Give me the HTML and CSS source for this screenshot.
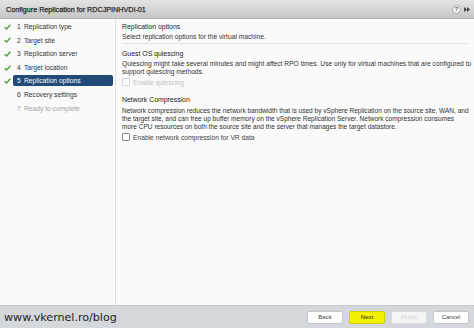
FILE: index.html
```html
<!DOCTYPE html>
<html>
<head>
	<title>Configure Replication</title>
	<link rel="stylesheet" href="styles.css">
</head>
<body>
	<div class="dialog">
		<div class="titlebar">
			<span class="title">Configure Replication for RDCJPINHVDI-01</span>
			<span class="tools">
				<span class="help">?</span>
				<svg class="more" width="6" height="5" viewBox="0 0 6 5"><path d="M0 0L3 2.5L0 5ZM3 0L6 2.5L3 5Z" fill="#444"/></svg>
			</span>
		</div>
		<div class="main">
			<ul class="steps">
				<li><span class="check"><svg width="7" height="6" viewBox="0 0 7 6"><path d="M0.6 3.2L2.6 5L6.4 0.8" fill="none" stroke="#52a03e" stroke-width="1.4"/></svg></span><span class="num">1</span>Replication type</li>
				<li><span class="check"><svg width="7" height="6" viewBox="0 0 7 6"><path d="M0.6 3.2L2.6 5L6.4 0.8" fill="none" stroke="#52a03e" stroke-width="1.4"/></svg></span><span class="num">2</span>Target site</li>
				<li><span class="check"><svg width="7" height="6" viewBox="0 0 7 6"><path d="M0.6 3.2L2.6 5L6.4 0.8" fill="none" stroke="#52a03e" stroke-width="1.4"/></svg></span><span class="num">3</span>Replication server</li>
				<li><span class="check"><svg width="7" height="6" viewBox="0 0 7 6"><path d="M0.6 3.2L2.6 5L6.4 0.8" fill="none" stroke="#52a03e" stroke-width="1.4"/></svg></span><span class="num">4</span>Target location</li>
				<li class="current"><span class="check"><svg width="7" height="6" viewBox="0 0 7 6"><path d="M0.6 3.2L2.6 5L6.4 0.8" fill="none" stroke="#52a03e" stroke-width="1.4"/></svg></span><span class="num">5</span>Replication options</li>
				<li><span class="check"></span><span class="num">6</span>Recovery settings</li>
				<li class="later"><span class="check"></span><span class="num">7</span>Ready to complete</li>
			</ul>
			<div class="content">
				<div class="head">
					<h2>Replication options</h2>
					<p>Select replication options for the virtual machine.</p>
				</div>
				<div class="section">
					<h3>Guest OS quiescing</h3>
					<p>Quiescing might take several minutes and might affect RPO times. Use only for virtual machines that are configured to<br>support quiescing methods.</p>
					<label class="opt disabled"><span class="box"></span>Enable quiescing</label>
				</div>
				<div class="section">
					<h3>Network Compression</h3>
					<p class="tight">Network compression reduces the network bandwidth that is used by vSphere Replication on the source site, WAN, and<br>the target site, and can free up buffer memory on the vSphere Replication Server. Network compression consumes<br>more CPU resources on both the source site and the server that manages the target datastore.</p>
					<label class="opt"><span class="box"></span>Enable network compression for VR data</label>
				</div>
			</div>
		</div>
		<div class="footer">
			<span class="site">www.vkernel.ro/blog</span>
			<span class="buttons">
				<span class="btn">Back</span>
				<span class="btn next">Next</span>
				<span class="btn off">Finish</span>
				<span class="btn">Cancel</span>
			</span>
		</div>
	</div>
</body>
</html>
```

FILE: styles.css
```css
body {
	margin: 0;
	font-family: "Liberation Sans", Arial, sans-serif;
	font-size: 6.7px;
	color: #333;
	background: #fafafa;
}
.dialog {
	display: flex;
	flex-direction: column;
	width: 474px;
	height: 328px;
}
.titlebar {
	height: 18px;
	display: flex;
	align-items: center;
	justify-content: space-between;
	padding: 0 4px 0 6px;
	background: linear-gradient(#e4e4e4, #c6c6c6);
	border-bottom: 1px solid #b4b4b4;
}
.title {
	font-size: 7.2px;
	color: #2a2a2a;
	-webkit-text-stroke: 0.25px #2a2a2a;
}
.tools {
	display: flex;
	align-items: center;
	gap: 3px;
}
.help {
	width: 7px;
	height: 7px;
	border-radius: 50%;
	background: #f2f2f2;
	border: 1px solid #a8a8a8;
	font-size: 5.5px;
	font-weight: bold;
	text-align: center;
	line-height: 7px;
	color: #555;
}
.main {
	flex: 1;
	display: flex;
	min-width: 0;
}
.steps {
	list-style: none;
	margin: 0;
	padding: 1px 2px 0;
	width: 111px;
	flex-shrink: 0;
	border-right: 1px solid #e2e2e2;
}
.steps li {
	display: flex;
	align-items: center;
	height: 13.6px;
	color: #333;
}
.check {
	width: 15px;
	display: flex;
	align-items: center;
	padding-left: 2px;
	box-sizing: border-box;
}
.num {
	width: 7px;
}
.steps li.current {
	background: #204a77;
	color: #fff;
	border-radius: 2px;
	margin: 1px 0 2px 11px;
	padding-left: 4px;
	height: 10.6px;
}
.steps li.current .check {
	margin-left: -15px;
}
.steps li.later {
	color: #a4a4a4;
}
.content {
	flex: 1;
	min-width: 0;
	padding: 4px 6px 0 6px;
}
.head {
	border-bottom: 1px solid #e4e4e4;
	padding-bottom: 2px;
}
h2, h3 {
	margin: 0;
	font-size: 6.9px;
	line-height: 8px;
	font-weight: normal;
	color: #222;
}
p {
	margin: 2px 0 0;
	line-height: 8px;
	white-space: nowrap;
}
p.tight {
	font-size: 6.55px;
	margin-top: 3px;
}
.section {
	margin-top: 6px;
}
.section + .section {
	margin-top: 10px;
}
.opt {
	display: flex;
	align-items: center;
	gap: 3px;
	margin-top: 2px;
	height: 8px;
	color: #444;
}
.box {
	width: 6px;
	height: 6px;
	border: 1px solid #888;
	background: #fff;
	border-radius: 1px;
}
.opt.disabled {
	color: #c0c0c0;
}
.opt.disabled .box {
	border-color: #d4d4d4;
}
.footer {
	height: 22px;
	display: flex;
	align-items: center;
	justify-content: space-between;
	padding: 0 5px 0 4px;
	background: #d4d7db;
	border-top: 1px solid #c6c9ce;
}
.site {
	font-family: "DejaVu Sans", sans-serif;
	font-size: 11.1px;
	color: #1e1e1e;
}
.buttons {
	display: flex;
	gap: 6px;
}
.btn {
	width: 34px;
	height: 11px;
	line-height: 11px;
	text-align: center;
	font-size: 6px;
	background: #fff;
	border: 1px solid #c4c4c4;
	border-radius: 2px;
	color: #444;
}
.btn.next {
	background: #f2f200;
	border-color: #d0d000;
	color: #222;
}
.btn.off {
	background: #f4f4f4;
	border-color: #dcdcdc;
	color: #cfcfcf;
}
```
